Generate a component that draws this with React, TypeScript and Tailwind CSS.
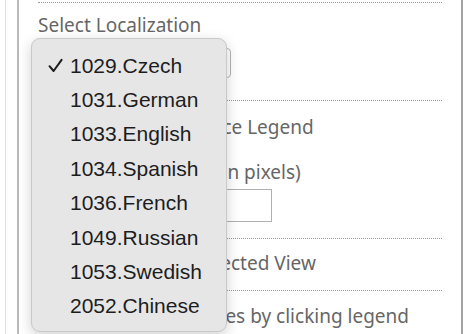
import { useState } from "react";

const LOCALES = [
  "1029.Czech",
  "1031.German",
  "1033.English",
  "1034.Spanish",
  "1036.French",
  "1049.Russian",
  "1053.Swedish",
  "2052.Chinese",
];

function CheckIcon() {
  return (
    <svg width="15" height="15" viewBox="0 0 15 15" fill="none">
      <path d="M1.5 8.2 L5.6 13 L13.6 1.8" stroke="#1d1d1d" strokeWidth="2" strokeLinecap="round" strokeLinejoin="round" />
    </svg>
  );
}

function Checkbox() {
  return <span className="inline-block h-[13px] w-[13px] rounded-[3px] border border-[#999] bg-white align-middle" />;
}

function App() {
  const [locale, setLocale] = useState("1029.Czech");

  return (
    <div className="relative flex h-[334px] w-[474px] overflow-hidden bg-white font-['Noto_Sans',sans-serif] text-[19px] text-[#666]">
      {/* outer frame */}
      <div className="ml-[5px] w-[12px] border-l border-[#e2e2e2]" />

      {/* settings panel */}
      <div className="flex w-[446px] flex-col border-l-2 border-r-2 border-l-[#b9b9b9] border-r-[#a3a3a3] pl-[19px] pr-[19px]">
        <div className="h-[3px] border-b border-dotted border-[#8b97c9]" />

        <div className="border-b border-dotted border-[#8b97c9] pt-[11px] pb-[22px]">
          <div className="leading-[22px] whitespace-nowrap">Select Localization</div>
          <div className="mt-[12px] h-[30px] w-[193px] rounded-[4px] border border-[#b5b5b5] bg-white" />
        </div>

        <div className="border-b border-dotted border-[#8b97c9] pt-[15px] pb-[16px]">
          <div className="flex items-center gap-[4px] leading-[22px] whitespace-nowrap">
            <Checkbox />
            <span>Show Map Reference Legend</span>
          </div>
          <div className="mt-[23px] leading-[22px] whitespace-nowrap">Legend Pane Width (in pixels)</div>
          <div className="mt-[6px] h-[33px] w-[234px] border border-[#b0b0b0] bg-white" />
        </div>

        <div className="border-b border-dotted border-[#8b97c9] pt-[13px] pb-[16px]">
          <div className="flex items-center gap-[5px] leading-[22px] whitespace-nowrap">
            <Checkbox />
            <span>Remember the Selected View</span>
          </div>
        </div>

        <div className="pt-[14px]">
          <div className="flex items-center gap-[9px] leading-[22px] whitespace-nowrap">
            <Checkbox />
            <span>Allow toggling series by clicking legend</span>
          </div>
        </div>
      </div>

      {/* open select menu */}
      <div className="absolute left-[31px] top-[38px] w-[196px] rounded-[9px] border border-[#c9c9c9] bg-[#e6e6e6] pt-[9px] pb-[8px] font-['Liberation_Sans',Arial,sans-serif] text-[21px] text-[#1d1d1d] shadow-[0_4px_14px_rgba(0,0,0,0.18)]">
        {LOCALES.map((name) => (
          <div
            key={name}
            onClick={() => setLocale(name)}
            className="flex h-[34.4px] items-center"
          >
            <span className="flex w-[38px] pl-[16px]">{locale === name ? <CheckIcon /> : null}</span>
            <span className="leading-none">{name}</span>
          </div>
        ))}
      </div>
    </div>
  );
}

export default App;
